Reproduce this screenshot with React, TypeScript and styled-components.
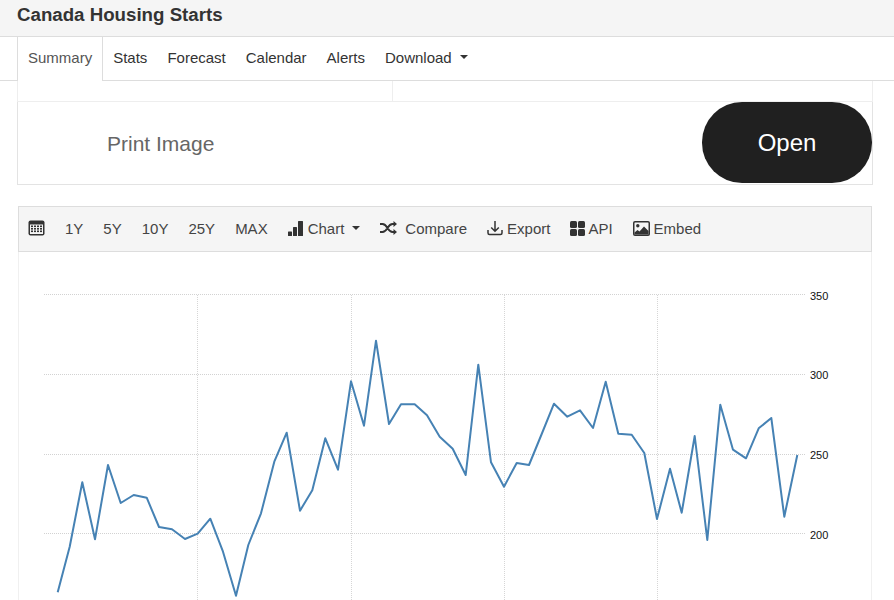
import React from "react";
import styled, { createGlobalStyle } from "styled-components";

const GlobalStyle = createGlobalStyle`
  html, body {
    margin: 0;
    height: 600px;
    overflow: hidden;
    background: #fff;
    font-family: "Liberation Sans", Arial, sans-serif;
    color: #333;
  }
`;

const Header = styled.header`
  height: 36px;
  padding-left: 17px;
  display: flex;
  align-items: center;
  background: #f5f5f5;
  border-bottom: 1px solid #ddd;
`;

const Title = styled.h1`
  margin: 0 0 6px;
  font-size: 18.7px;
  font-weight: 700;
  color: #333;
`;

const Tabs = styled.nav`
  height: 43px;
  padding-left: 17px;
  display: flex;
  border-bottom: 1px solid #ddd;
`;

const Tab = styled.a<{ $active?: boolean }>`
  height: 44px;
  box-sizing: border-box;
  padding: 0 10px 4px;
  display: flex;
  align-items: center;
  gap: 8px;
  font-size: 15px;
  background: ${p => (p.$active ? "#fff" : "transparent")};
  color: ${p => (p.$active ? "#555" : "#333")};
  border-left: ${p => (p.$active ? "1px solid #ddd" : "none")};
  border-right: ${p => (p.$active ? "1px solid #ddd" : "none")};
`;

const Caret = styled.span<{ $offset?: number }>`
  width: 0;
  height: 0;
  margin-left: ${p => p.$offset ?? 0}px;
  border-top: 4px solid #333;
  border-left: 4px solid transparent;
  border-right: 4px solid transparent;
`;

const Main = styled.main`
  width: 856px;
  margin-left: 17px;
`;

const Strip = styled.div`
  height: 21px;
  display: grid;
  grid-template-columns: 375px 1fr;
  box-sizing: border-box;
  border: 1px solid #eee;
  border-top: none;
`;

const StripCell = styled.div`
  border-right: 1px solid #eee;
`;

const AdCard = styled.section`
  height: 83px;
  box-sizing: border-box;
  display: flex;
  align-items: flex-start;
  justify-content: space-between;
  border: 1px solid #e3e3e3;
  border-top: none;
`;

const AdLabel = styled.span`
  align-self: center;
  margin: 2px 0 0 89px;
  font-size: 21px;
  color: #666;
`;

const OpenButton = styled.button`
  width: 170px;
  height: 81px;
  padding: 0;
  border: none;
  border-radius: 40px;
  background: #202020;
  color: #fff;
  font-family: inherit;
  font-size: 24px;
`;

const Toolbar = styled.div`
  height: 46px;
  margin: 21px 1px 0;
  padding: 0 0 2px 9px;
  box-sizing: border-box;
  display: flex;
  align-items: center;
  gap: 20px;
  background: #f5f5f5;
  border: 1px solid #ddd;
  font-size: 15px;
  color: #444;
`;

const ToolItem = styled.span<{ $gap?: number }>`
  display: flex;
  align-items: center;
  gap: ${p => p.$gap ?? 5}px;
  white-space: nowrap;

  svg {
    flex: none;
  }
`;

const ChartPanel = styled.div`
  height: 360px;
  margin: 0 1px;
  border: 1px solid #f0f0f0;
  border-top: none;
`;

const ChartSvg = styled.svg`
  display: block;
  margin-left: -19px;
  overflow: visible;
`;

const gridY = [294.5, 374.5, 454.5, 533.5];
const gridX = [197.5, 351.5, 504.5, 657.5];
const labels = [
  { y: 299.5, text: "350" },
  { y: 379, text: "300" },
  { y: 459, text: "250" },
  { y: 539, text: "200" },
];

const points: [number, number][] = [
  [57.7, 592.3], [69.7, 546.7], [82.3, 482.3], [95, 539.3], [108, 465], [120.7, 503],
  [133.7, 495], [146.7, 497.7], [159, 527], [172, 529.3], [185, 539], [197.7, 533.7],
  [210.3, 518.7], [223, 551.7], [236, 595.7], [248.3, 545], [261, 513.3], [274.3, 461.7],
  [286.7, 432.7], [300, 510.7], [312.3, 490.3], [325.3, 438.3], [338, 469.7], [351, 381.3],
  [364, 425.7], [376, 340.7], [389, 424], [401, 404.3], [414.7, 404.3], [427, 415.3],
  [439.7, 436.7], [452.7, 448.7], [465.7, 475], [478.3, 364.7], [491, 462.3], [504, 486.7],
  [516.7, 463], [529, 465], [541.7, 434], [554, 403.7], [567.3, 416.7], [580, 410.3],
  [593, 428], [605.7, 381.7], [618.3, 433.7], [631.7, 434.7], [644.3, 453], [657, 519],
  [670, 468.7], [681.7, 512.7], [694.7, 436], [707.3, 540], [720.3, 404.7], [733, 449.7],
  [746, 458.3], [758.7, 428.3], [771.3, 418], [784.3, 516.7], [797.3, 455],
];

const CalendarIcon = () => (
  <svg width="17" height="16" viewBox="0 0 17 16">
    <rect x="0.5" y="0.5" width="16" height="15" rx="2" fill="#333" />
    <rect x="2" y="4.5" width="13" height="9.5" fill="#f5f5f5" />
    {[3, 6, 9, 12].map(x =>
      [5.5, 8, 10.5].map(y => <rect key={`${x}-${y}`} x={x} y={y} width="2" height="1.6" fill="#333" />)
    )}
  </svg>
);

const BarsIcon = () => (
  <svg width="15" height="15" viewBox="0 0 15 15" fill="#333">
    <rect x="0" y="10.5" width="4" height="4.5" rx="0.5" />
    <rect x="5" y="6" width="4" height="9" rx="0.5" />
    <rect x="10" y="0" width="5" height="15" rx="0.5" />
  </svg>
);

const ShuffleIcon = () => (
  <svg width="17" height="14" viewBox="0 0 17 14">
    <path
      d="M0 3h2.5c2.5 0 3.5 1.5 5 4s2.5 4 5 4H14M0 11h2.5c2.500 0 3.500-1.500 5-4s2.500-4 5-4H14"
      fill="none"
      stroke="#333"
      strokeWidth="1.8"
    />
    <path d="M13.500 0l3.500 3-3.500 3zM13.500 8l3.500 3-3.500 3z" fill="#333" />
  </svg>
);

const ExportIcon = () => (
  <svg width="16" height="16" viewBox="0 0 16 16" fill="none" stroke="#333" strokeWidth="1.5">
    <path d="M1 10v3a1.500 1.500 0 0 0 1.500 1.500h11A1.500 1.500 0 0 0 15 13v-3" />
    <path d="M8 1v10M4.200 7.500L8 11.200l3.800-3.700" />
  </svg>
);

const GridIcon = () => (
  <svg width="15" height="15" viewBox="0 0 15 15" fill="#333">
    <rect x="0" y="0" width="7" height="7" rx="1.500" />
    <rect x="8" y="0" width="7" height="7" rx="1.500" />
    <rect x="0" y="8" width="7" height="7" rx="1.500" />
    <rect x="8" y="8" width="7" height="7" rx="1.500" />
  </svg>
);

const ImageIcon = () => (
  <svg width="17" height="15" viewBox="0 0 17 15">
    <rect x="0" y="0" width="17" height="15" rx="2" fill="#333" />
    <rect x="1.500" y="1.500" width="14" height="12" rx="0.500" fill="#f5f5f5" />
    <circle cx="4.800" cy="4.800" r="1.700" fill="#333" />
    <path d="M1.500 13.500v-2l3-2.500 2 1.500 4.500-5 4.500 4.500v3.500z" fill="#333" />
  </svg>
);

const App: React.FC = () => (
  <>
    <GlobalStyle />
    <Header>
      <Title>Canada Housing Starts</Title>
    </Header>
    <Tabs>
      <Tab $active>Summary</Tab>
      <Tab>Stats</Tab>
      <Tab>Forecast</Tab>
      <Tab>Calendar</Tab>
      <Tab>Alerts</Tab>
      <Tab>
        Download <Caret />
      </Tab>
    </Tabs>
    <Main>
      <Strip>
        <StripCell />
      </Strip>
      <AdCard>
        <AdLabel>Print Image</AdLabel>
        <OpenButton>Open</OpenButton>
      </AdCard>
      <Toolbar>
        <ToolItem>
          <CalendarIcon />
        </ToolItem>
        <ToolItem>1Y</ToolItem>
        <ToolItem>5Y</ToolItem>
        <ToolItem>10Y</ToolItem>
        <ToolItem>25Y</ToolItem>
        <ToolItem>MAX</ToolItem>
        <ToolItem>
          <BarsIcon />
          Chart
          <Caret $offset={3} />
        </ToolItem>
        <ToolItem $gap={8}>
          <ShuffleIcon />
          Compare
        </ToolItem>
        <ToolItem $gap={4}>
          <ExportIcon />
          Export
        </ToolItem>
        <ToolItem $gap={3}>
          <GridIcon />
          API
        </ToolItem>
        <ToolItem $gap={4}>
          <ImageIcon />
          Embed
        </ToolItem>
      </Toolbar>
      <ChartPanel>
        <ChartSvg width="894" height="360" viewBox="0 252 894 360">
          {gridY.map(y => (
            <line key={y} x1="44" x2="805" y1={y} y2={y} stroke="#d2d2d2" strokeDasharray="1 1" />
          ))}
          {gridX.map(x => (
            <line key={x} x1={x} x2={x} y1="295" y2="612" stroke="#d6d6d6" strokeDasharray="1 1" />
          ))}
          <polyline
            points={points.map(p => p.join(",")).join(" ")}
            fill="none"
            stroke="#4682b4"
            strokeWidth="2"
            strokeLinejoin="round"
          />
          {labels.map(l => (
            <text key={l.text} x="810" y={l.y} fontSize="11" fill="#111" fontFamily="Liberation Sans, Arial, sans-serif">
              {l.text}
            </text>
          ))}
        </ChartSvg>
      </ChartPanel>
    </Main>
  </>
);

export default App;
